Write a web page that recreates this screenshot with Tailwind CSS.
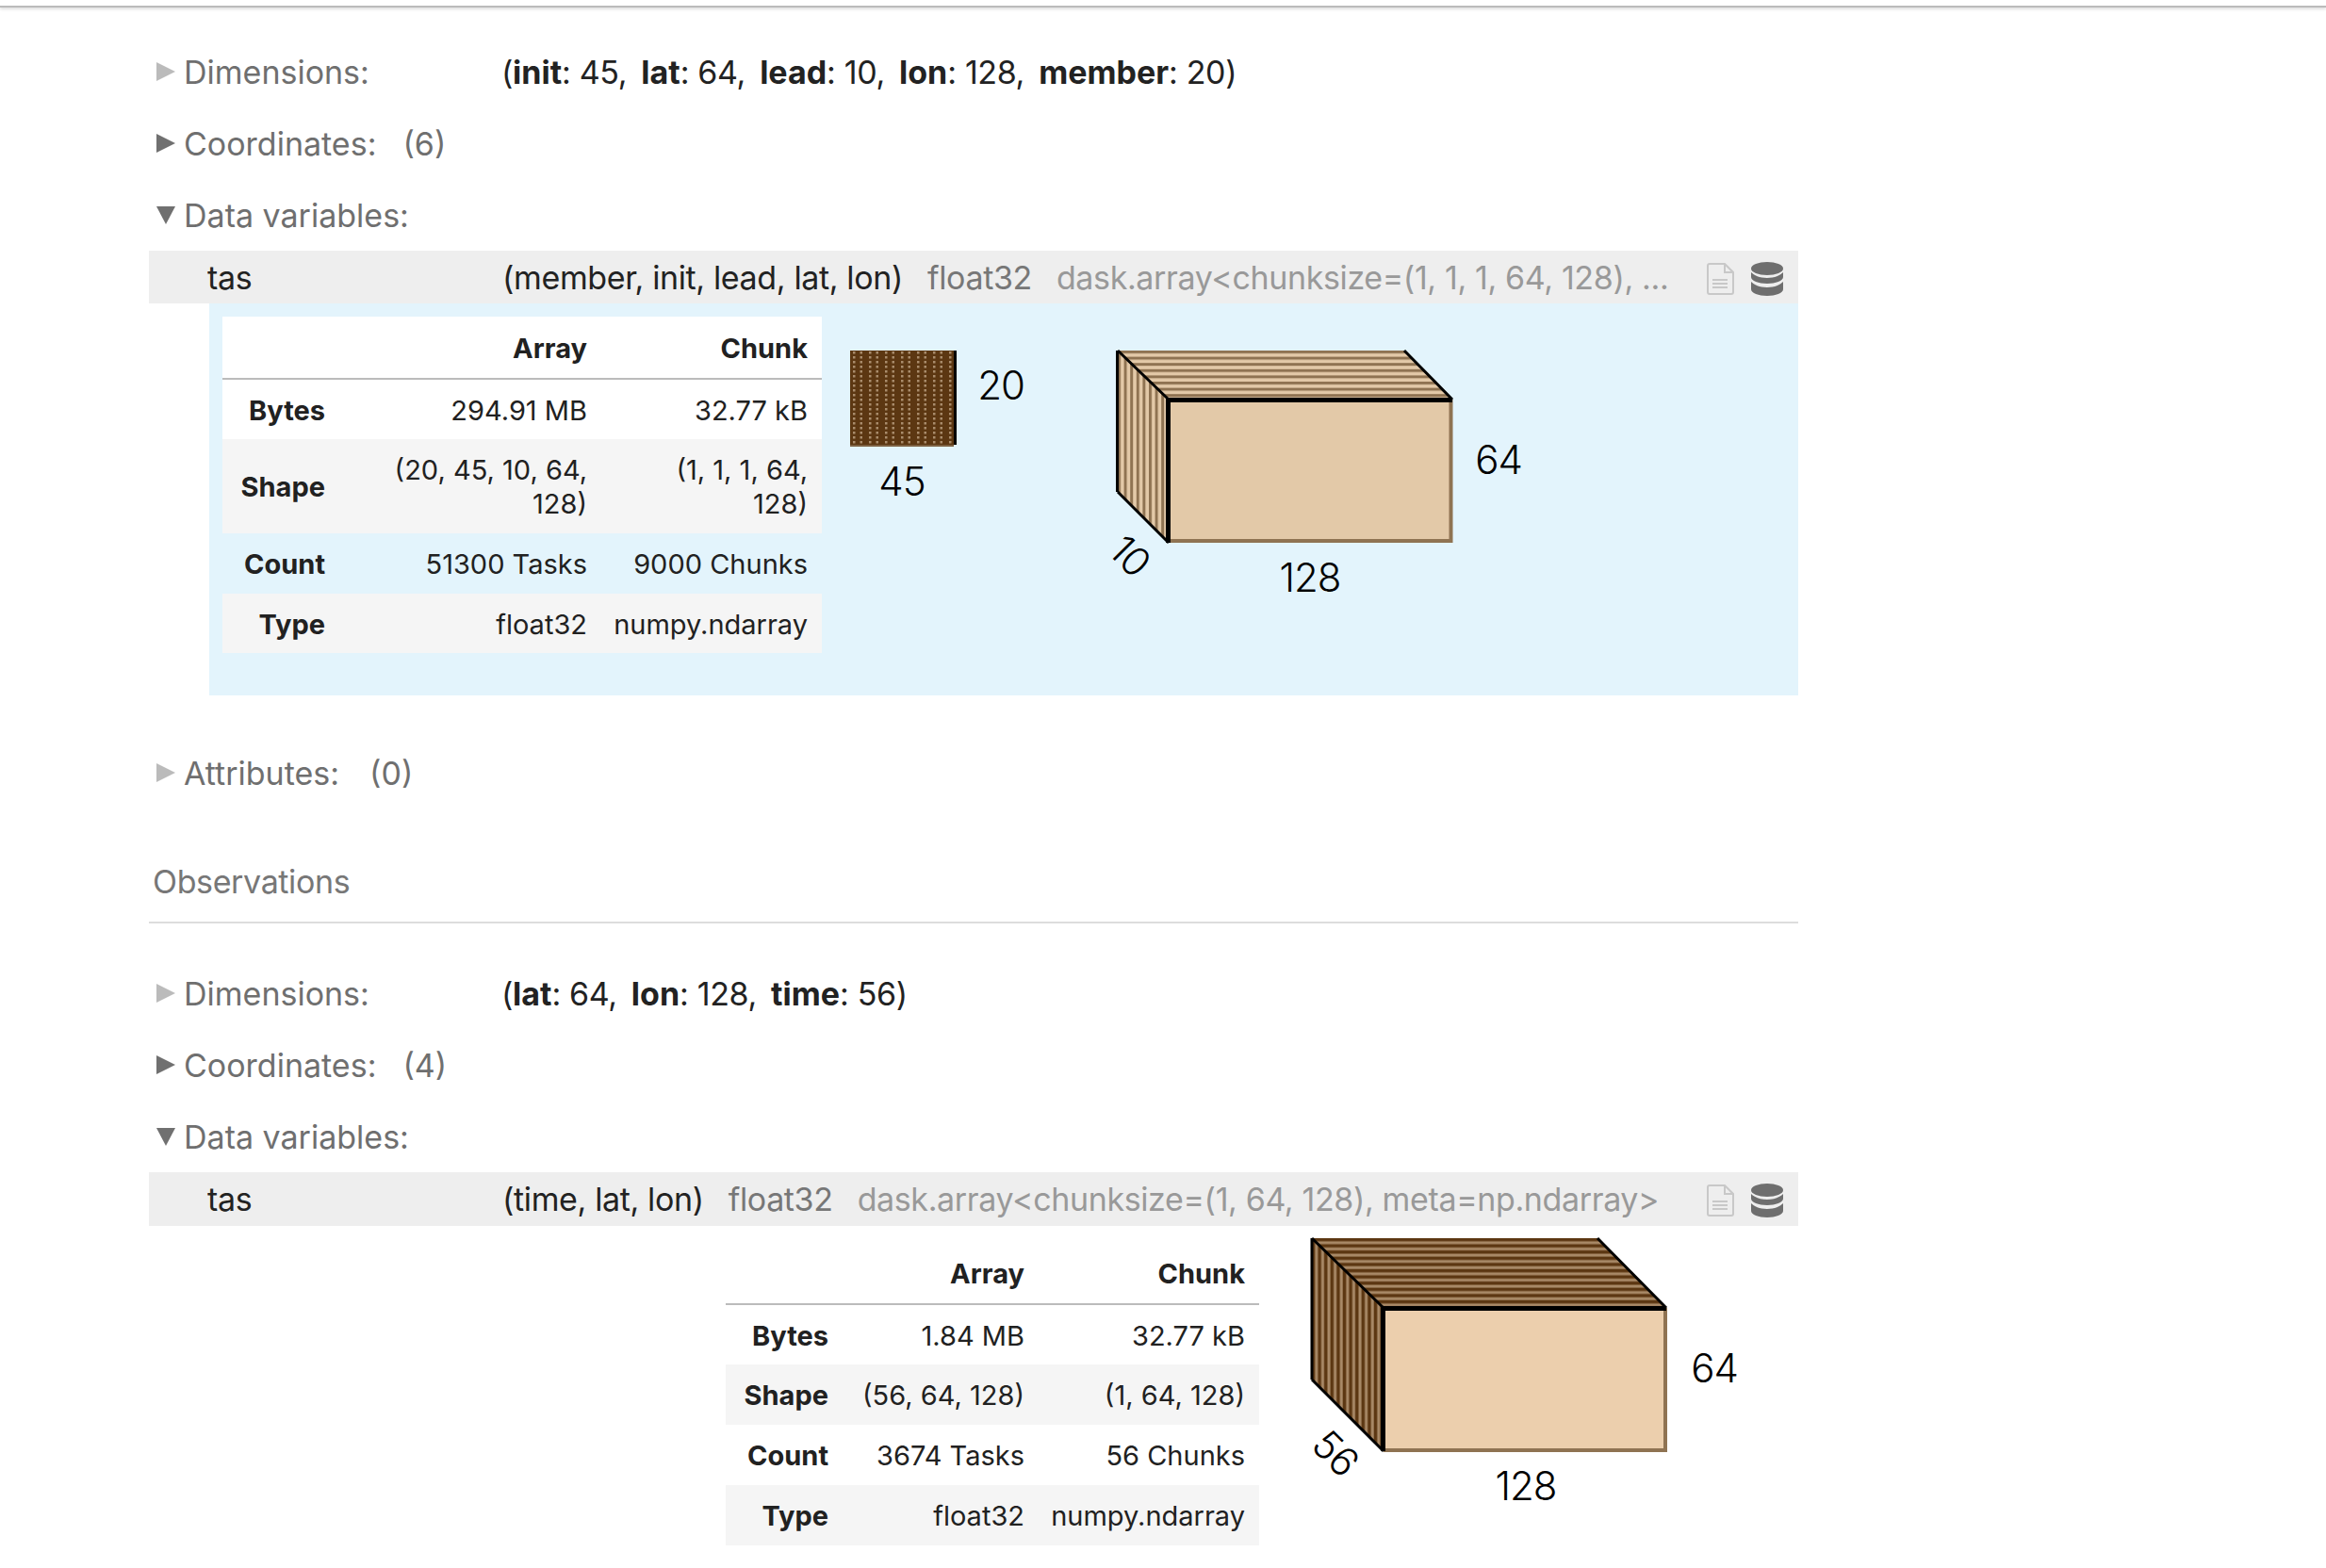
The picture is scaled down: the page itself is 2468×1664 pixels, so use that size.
<!DOCTYPE html>
<html lang="en">
<head>
<meta charset="UTF-8">
<title>Ensemble dataset</title>
<script src="https://cdn.jsdelivr.net/npm/@tailwindcss/browser@4"></script>
</head>
<body class="bg-white font-['Inter',sans-serif] text-[34px] text-[#222] overflow-hidden">
<div class="h-[8px] border-b-2 border-[#bbb] shadow-[0_2px_3px_rgba(0,0,0,0.12)]"></div>
<main class="ml-[158px] w-[1750px] mt-[30px]">

  <!-- forecast -->
  <div class="flex items-center h-[76px]">
    <svg class="ml-[8px] w-[20px] h-[20px] fill-[#bbb]" viewBox="0 0 20 20"><polygon points="0,0 20,10 0,20"/></svg>
    <span class="ml-[9px] w-[337px] text-[#6f6f6f]">Dimensions:</span>
    <span class="tracking-[-0.37px]">(<b class="tracking-normal">init</b>: 45, <b class="ml-[6px] tracking-normal">lat</b>: 64, <b class="ml-[6px] tracking-normal">lead</b>: 10, <b class="ml-[6px] tracking-normal">lon</b>: 128, <b class="ml-[6px] tracking-normal">member</b>: 20)</span>
  </div>
  <div class="flex items-center h-[76px]">
    <svg class="ml-[8px] w-[20px] h-[20px] fill-[#707070]" viewBox="0 0 20 20"><polygon points="0,0 20,10 0,20"/></svg>
    <span class="ml-[9px] text-[#6f6f6f]">Coordinates:</span><span class="ml-[28px] text-[#6f6f6f]">(6)</span>
  </div>
  <div class="flex items-center h-[76px]">
    <svg class="ml-[8px] w-[20px] h-[20px] fill-[#707070]" viewBox="0 0 20 20"><polygon points="0,1 20,1 10,20"/></svg>
    <span class="ml-[9px] text-[#6f6f6f]">Data variables:</span>
  </div>

  <div class="flex items-center h-[56px] bg-[#eee] relative tracking-[-0.37px]">
    <span class="ml-[62px] w-[313px]">tas</span>
    <span>(member, init, lead, lat, lon)</span>
    <span class="ml-[26px] text-[#777]">float32</span>
    <span class="ml-[26px] text-[#999]">dask.array&lt;chunksize=(1, 1, 1, 64, 128), ...</span>
    <svg class="absolute left-[1652px] top-[13px] w-[30px] h-[34px]" viewBox="0 0 30 34" fill="none" stroke="#c8c8c8" stroke-width="2"><path d="M2 3a2 2 0 0 1 2-2h16l9 9v21a2 2 0 0 1-2 2H4a2 2 0 0 1-2-2z"/><path d="M20 1v9h9"/><path d="M7 18h16M7 22h16M7 26h16"/></svg>
    <svg class="absolute left-[1700px] top-[12px] w-[34px] h-[36px] fill-[#6e6e6e]" viewBox="0 0 34 36"><ellipse cx="17" cy="7" rx="17" ry="7"/><path d="M0 11v5c0 4 8 7 17 7s17-3 17-7v-5c-3 3-9 6-17 6S3 14 0 11z"/><path d="M0 21v8c0 4 8 7 17 7s17-3 17-7v-8c-3 3-9 6-17 6S3 24 0 21z"/></svg>
  </div>
  <div class="ml-[64px] h-[416px] bg-[#e3f4fc] flex items-start pl-[14px] pt-[14px]">
    <table class="table-fixed w-[636px] text-[29px] leading-[36px] text-right text-[#212121] shrink-0 [&_th]:pt-[2px] [&_td]:pt-[2px]">
      <colgroup><col class="w-[124px]"><col class="w-[278px]"><col class="w-[234px]"></colgroup>
      <tr class="bg-white h-[66px] border-b-2 border-[#bbb]"><th class="pr-[15px]"></th><th class="pr-[15px]">Array</th><th class="pr-[15px]">Chunk</th></tr>
      <tr class="bg-white h-[64px]"><th class="pr-[15px]">Bytes</th><td class="pr-[15px]">294.91 MB</td><td class="pr-[15px]">32.77 kB</td></tr>
      <tr class="bg-[#f5f5f5] h-[100px]"><th class="pr-[15px]">Shape</th><td class="pr-[15px]">(20, 45, 10, 64,<br>128)</td><td class="pr-[15px]">(1, 1, 1, 64,<br>128)</td></tr>
      <tr class="h-[64px]"><th class="pr-[15px]">Count</th><td class="pr-[15px]">51300 Tasks</td><td class="pr-[15px]">9000 Chunks</td></tr>
      <tr class="bg-[#f5f5f5] h-[63px]"><th class="pr-[15px]">Type</th><td class="pr-[15px]">float32</td><td class="pr-[15px]">numpy.ndarray</td></tr>
    </table>
    <svg class="ml-[8px] shrink-0" width="820" height="300" viewBox="880 336 820 300" font-family="Inter, sans-serif" font-weight="300" font-size="42" letter-spacing="-1" fill="#000">
      <defs>
        <pattern id="dots" x="902" y="372" width="34" height="5" patternUnits="userSpaceOnUse">
          <rect width="34" height="5" fill="#5c3712"/>
          <rect x="3" y="1" width="2.500" height="2.500" fill="#a98c6c"/>
          <rect x="10.500" y="1" width="2.500" height="2.500" fill="#a98c6c"/>
          <rect x="20" y="1" width="2.500" height="2.500" fill="#a98c6c"/>
          <rect x="27.500" y="1" width="2.500" height="2.500" fill="#a98c6c"/>
        </pattern>
        <pattern id="top1" x="0" y="372" width="10" height="6.600" patternUnits="userSpaceOnUse">
          <rect width="10" height="6.600" fill="#e3c9a8"/>
          <rect width="10" height="3" fill="#8f7352"/>
        </pattern>
        <pattern id="side1" x="1186" y="0" width="6.600" height="10" patternUnits="userSpaceOnUse">
          <rect width="6.600" height="10" fill="#e3c9a8"/>
          <rect width="3" height="10" fill="#8f7352"/>
        </pattern>
      </defs>
      <rect x="902" y="372" width="110" height="102" fill="url(#dots)"/>
      <rect x="902" y="472" width="110" height="2" fill="#7d6142"/>
      <rect x="1012" y="372" width="3" height="100" fill="#000"/>
      <text x="1062" y="424" text-anchor="middle">20</text>
      <text x="957" y="526" text-anchor="middle">45</text>

      <polygon points="1186,372 1490,372 1541,424 1240,424" fill="url(#top1)"/>
      <polygon points="1186,372 1240,424 1240,576 1186,522" fill="url(#side1)"/>
      <rect x="1240" y="424" width="301" height="152" fill="#e3c9a8"/>
      <path d="M1240 574H1541M1539.500 424V576" stroke="#8f7352" stroke-width="4" fill="none"/>
      <path d="M1238 424.500H1541M1239.500 422V576" stroke="#000" stroke-width="5" fill="none"/>
      <path d="M1186 372L1240 424M1186 522L1240 576M1185.500 372V522M1490 372L1541 424" stroke="#000" stroke-width="3"/>
      <text x="1590" y="503" text-anchor="middle">64</text>
      <text x="1390" y="628" text-anchor="middle">128</text>
      <text x="0" y="0" text-anchor="middle" transform="translate(1199,590) rotate(45) translate(0,15)">10</text>
    </svg>
  </div>

  <div class="flex items-center h-[76px] mt-[44px]">
    <svg class="ml-[8px] w-[20px] h-[20px] fill-[#bbb]" viewBox="0 0 20 20"><polygon points="0,0 20,10 0,20"/></svg>
    <span class="ml-[9px] text-[#6f6f6f]">Attributes:</span><span class="ml-[32px] text-[#6f6f6f]">(0)</span>
  </div>

  <!-- observations -->
  <div class="mt-[53px] ml-[4px] text-[#777] leading-[50px] tracking-[-0.37px]">Observations</div>
  <div class="mt-[17px] h-[2px] bg-[#ddd]"></div>

  <div class="flex items-center h-[76px] mt-[36px]">
    <svg class="ml-[8px] w-[20px] h-[20px] fill-[#bbb]" viewBox="0 0 20 20"><polygon points="0,0 20,10 0,20"/></svg>
    <span class="ml-[9px] w-[337px] text-[#6f6f6f]">Dimensions:</span>
    <span class="tracking-[-0.37px]">(<b class="tracking-normal">lat</b>: 64, <b class="ml-[6px] tracking-normal">lon</b>: 128, <b class="ml-[6px] tracking-normal">time</b>: 56)</span>
  </div>
  <div class="flex items-center h-[76px]">
    <svg class="ml-[8px] w-[20px] h-[20px] fill-[#707070]" viewBox="0 0 20 20"><polygon points="0,0 20,10 0,20"/></svg>
    <span class="ml-[9px] text-[#6f6f6f]">Coordinates:</span><span class="ml-[28px] text-[#6f6f6f]">(4)</span>
  </div>
  <div class="flex items-center h-[76px]">
    <svg class="ml-[8px] w-[20px] h-[20px] fill-[#707070]" viewBox="0 0 20 20"><polygon points="0,1 20,1 10,20"/></svg>
    <span class="ml-[9px] text-[#6f6f6f]">Data variables:</span>
  </div>

  <div class="flex items-center h-[57px] bg-[#eee] relative tracking-[-0.37px]">
    <span class="ml-[62px] w-[313px]">tas</span>
    <span>(time, lat, lon)</span>
    <span class="ml-[26px] text-[#777]">float32</span>
    <span class="ml-[26px] text-[#999]">dask.array&lt;chunksize=(1, 64, 128), meta=np.ndarray&gt;</span>
    <svg class="absolute left-[1652px] top-[13px] w-[30px] h-[34px]" viewBox="0 0 30 34" fill="none" stroke="#c8c8c8" stroke-width="2"><path d="M2 3a2 2 0 0 1 2-2h16l9 9v21a2 2 0 0 1-2 2H4a2 2 0 0 1-2-2z"/><path d="M20 1v9h9"/><path d="M7 18h16M7 22h16M7 26h16"/></svg>
    <svg class="absolute left-[1700px] top-[12px] w-[34px] h-[36px] fill-[#6e6e6e]" viewBox="0 0 34 36"><ellipse cx="17" cy="7" rx="17" ry="7"/><path d="M0 11v5c0 4 8 7 17 7s17-3 17-7v-5c-3 3-9 6-17 6S3 14 0 11z"/><path d="M0 21v8c0 4 8 7 17 7s17-3 17-7v-8c-3 3-9 6-17 6S3 24 0 21z"/></svg>
  </div>
  <div class="flex items-start pl-[612px]">
    <table class="table-fixed w-[566px] mt-[17px] text-[29px] leading-[36px] text-right text-[#212121] shrink-0 [&_th]:pt-[2px] [&_td]:pt-[2px]">
      <colgroup><col class="w-[124px]"><col class="w-[208px]"><col class="w-[234px]"></colgroup>
      <tr class="h-[66px] border-b-2 border-[#bbb]"><th class="pr-[15px]"></th><th class="pr-[15px]">Array</th><th class="pr-[15px]">Chunk</th></tr>
      <tr class="h-[64px]"><th class="pr-[15px]">Bytes</th><td class="pr-[15px]">1.84 MB</td><td class="pr-[15px]">32.77 kB</td></tr>
      <tr class="bg-[#f5f5f5] h-[64px]"><th class="pr-[15px]">Shape</th><td class="pr-[15px]">(56, 64, 128)</td><td class="pr-[15px]">(1, 64, 128)</td></tr>
      <tr class="h-[64px]"><th class="pr-[15px]">Count</th><td class="pr-[15px]">3674 Tasks</td><td class="pr-[15px]">56 Chunks</td></tr>
      <tr class="bg-[#f5f5f5] h-[64px]"><th class="pr-[15px]">Type</th><td class="pr-[15px]">float32</td><td class="pr-[15px]">numpy.ndarray</td></tr>
    </table>
    <svg class="shrink-0" width="520" height="330" viewBox="1336 1301 520 330" font-family="Inter, sans-serif" font-weight="300" font-size="42" letter-spacing="-1" fill="#000">
      <defs>
        <pattern id="top2" x="0" y="1314" width="10" height="6.600" patternUnits="userSpaceOnUse">
          <rect width="10" height="6.600" fill="#5c3712"/>
          <rect y="3.300" width="10" height="3" fill="#a98a68"/>
        </pattern>
        <pattern id="side2" x="1392" y="0" width="6.600" height="10" patternUnits="userSpaceOnUse">
          <rect width="6.600" height="10" fill="#5c3712"/>
          <rect x="3.300" width="3" height="10" fill="#a98a68"/>
        </pattern>
      </defs>
      <polygon points="1392,1314 1695,1314 1768,1388 1468,1388" fill="url(#top2)"/>
      <polygon points="1392,1314 1468,1388 1468,1540 1392,1464" fill="url(#side2)"/>
      <rect x="1468" y="1388" width="300" height="152" fill="#eccfad"/>
      <path d="M1468 1539H1769M1767 1388V1541" stroke="#8f7352" stroke-width="4" fill="none"/>
      <path d="M1466 1388.500H1768M1467.500 1386V1540" stroke="#000" stroke-width="5" fill="none"/>
      <path d="M1392 1314L1468 1388M1392 1464L1468 1540M1392 1314V1464M1695 1314L1768 1388" stroke="#000" stroke-width="3"/>
      <text x="1819" y="1467" text-anchor="middle">64</text>
      <text x="1619" y="1592" text-anchor="middle">128</text>
      <text x="0" y="0" text-anchor="middle" transform="translate(1417,1542) rotate(45) translate(0,15)">56</text>
    </svg>
  </div>
</main>
</body>
</html>
